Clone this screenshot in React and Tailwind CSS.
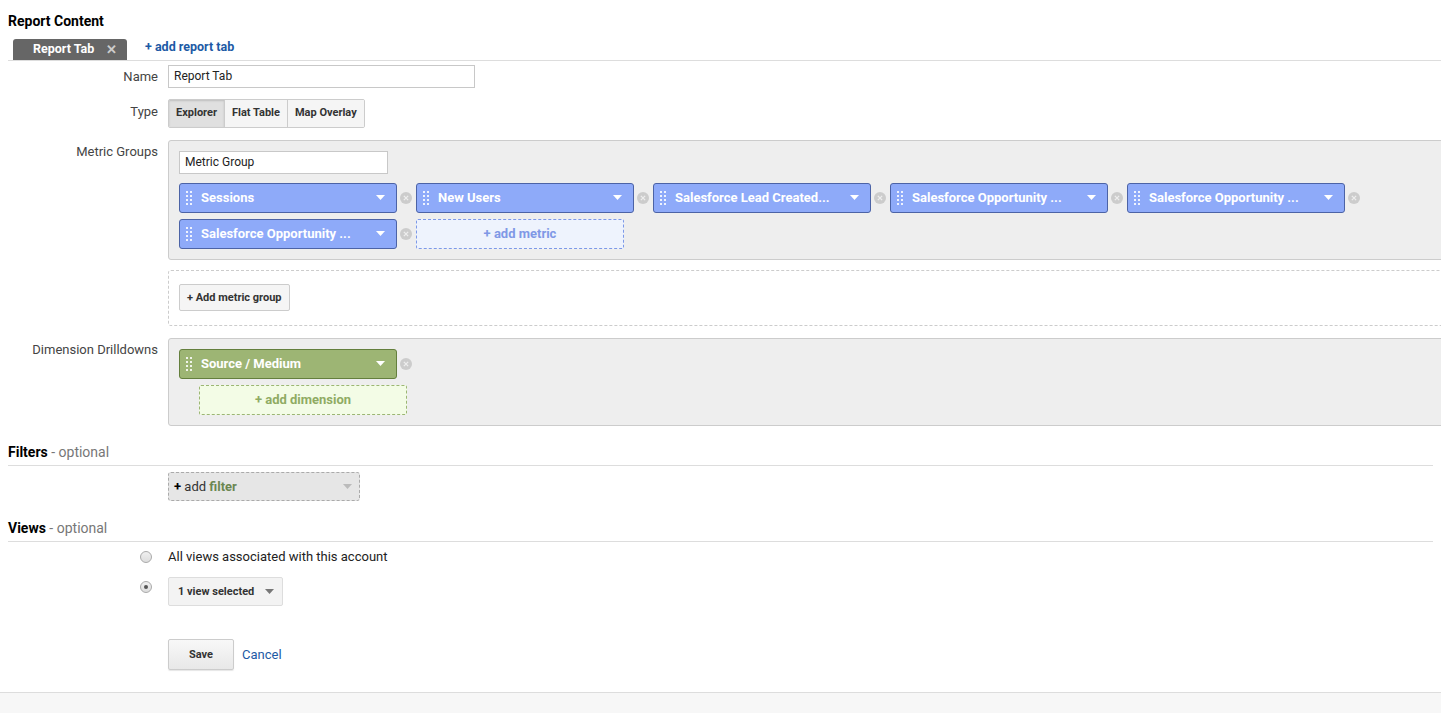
import React from 'react';

const font = { fontFamily: 'Roboto, "Liberation Sans", sans-serif' };

const Dots = () => (
  <svg width="6" height="14" viewBox="0 0 6 14" className="shrink-0">
    {[0, 1, 2, 3].map((r) => (
      <g key={r} fill="#ffffff" fillOpacity="0.85">
        <rect x="0" y={r * 4} width="2" height="2" />
        <rect x="4" y={r * 4} width="2" height="2" />
      </g>
    ))}
  </svg>
);

const Caret = ({ color = '#fff' }) => (
  <svg width="9" height="5" viewBox="0 0 9 5" className="shrink-0">
    <path d="M0 0h9L4.5 5z" fill={color} />
  </svg>
);

const Remove = () => (
  <svg width="12" height="12" viewBox="0 0 13 13" className="shrink-0">
    <circle cx="6.5" cy="6.5" r="6.5" fill="#cccccc" />
    <path d="M4.2 4.2l4.6 4.6M8.8 4.2l-4.6 4.6" stroke="#eeeeee" strokeWidth="1.4" />
  </svg>
);

const Chip = ({ label, green }) => (
  <div className="flex items-center gap-[3px]">
    <div
      className={
        'flex items-center h-[30px] w-[218px] rounded-[3px] border pl-[6px] pr-[11px] ' +
        (green ? 'bg-[#9db574] border-[#647f3d]' : 'bg-[#8eaaf9] border-[#4c63a6]')
      }
    >
      <Dots />
      <span className="ml-[9px] flex-1 truncate text-[13px] font-bold text-white">{label}</span>
      <Caret />
    </div>
    <Remove />
  </div>
);

const Label = ({ children, className = '' }) => (
  <div className={'w-[158px] shrink-0 text-right text-[13px] text-[#444] ' + className}>{children}</div>
);

const Row = ({ label, labelClass, children, className = '' }) => (
  <div className={'flex gap-[10px] ' + className}>
    <Label className={labelClass}>{label}</Label>
    <div className="flex-1 min-w-0">{children}</div>
  </div>
);

const Heading = ({ title, className = '' }) => (
  <div className={'mx-[8px] border-b border-[#dddddd] pb-[3px] leading-[20px] ' + className}>
    <span className="text-[14px] font-bold text-black">{title}</span>
    <span className="text-[14px] text-[#777]"> - optional</span>
  </div>
);

export default function App() {
  const metrics = [
    'Sessions',
    'New Users',
    'Salesforce Lead Created...',
    'Salesforce Opportunity ...',
    'Salesforce Opportunity ...',
  ];
  return (
    <div className="h-[713px] w-[1441px] overflow-hidden bg-white text-[#333]" style={font}>
      <div className="h-[693px] border-b border-[#dddddd]">
        <div className="px-[8px] pt-[12px]">
          <h2 className="text-[14px] font-bold leading-[18px] text-black">Report Content</h2>
        </div>
        <div className="ml-[8px] mt-[8px] flex items-end border-b border-[#dddddd]">
          <div className="ml-[5px] flex h-[21px] w-[114px] items-center rounded-t-[3px] bg-[#666666] pl-[20px] pr-[10px] text-[12.5px] font-bold text-white">
            <span className="flex-1">Report Tab</span>
            <span className="text-[13px] text-[#cccccc]">✕</span>
          </div>
          <a className="ml-[18px] mb-[3px] text-[12.5px] font-bold text-[#1d5aa5]">+ add report tab</a>
        </div>

        <Row label="Name" labelClass="pt-[2px]" className="mt-[4px]">
          <div className="flex h-[23px] w-[307px] items-center border border-[#c8c8c8] px-[5px] text-[12px] text-[#222]">
            Report Tab
          </div>
        </Row>

        <Row label="Type" labelClass="pt-[3px]" className="mt-[11px]">
          <div className="flex h-[29px] w-fit overflow-hidden rounded-[2px] border border-[#cccccc] text-[11px] font-bold text-[#333]">
            <div className="flex items-center bg-[#e0e0e0] px-[7px] shadow-[inset_0_1px_2px_rgba(0,0,0,0.15)]">Explorer</div>
            <div className="flex items-center border-l border-[#cccccc] bg-[#f5f5f5] px-[7px]">Flat Table</div>
            <div className="flex items-center border-l border-[#cccccc] bg-[#f5f5f5] px-[7px]">Map Overlay</div>
          </div>
        </Row>

        <Row label="Metric Groups" labelClass="pt-[2px]" className="mt-[12px]">
          <div className="w-[1290px] rounded-[3px] border border-[#cccccc] bg-[#eeeeee] px-[10px] pt-[10px] pb-[10px]">
            <div className="flex h-[23px] w-[209px] items-center border border-[#c8c8c8] bg-white px-[5px] text-[12px] text-[#222]">
              Metric Group
            </div>
            <div className="mt-[9px] flex flex-wrap gap-x-[4px] gap-y-[6px] w-[1200px]">
              {metrics.map((m, i) => (
                <Chip key={i} label={m} />
              ))}
              <Chip label="Salesforce Opportunity ..." />
              <div className="flex h-[30px] w-[208px] items-center justify-center rounded-[2px] border border-dashed border-[#7d99e8] bg-[#eef3fd] text-[13px] font-bold text-[#7f98e6]">
                + add metric
              </div>
            </div>
          </div>
        </Row>

        <Row label="" className="mt-[10px]">
          <div className="flex h-[56px] w-[1290px] items-center rounded-[3px] border border-dashed border-[#cccccc] px-[10px]">
            <div className="flex h-[27px] items-center rounded-[2px] border border-[#cccccc] bg-[#f5f5f5] px-[7px] text-[11px] font-bold text-[#333]">
              + Add metric group
            </div>
          </div>
        </Row>

        <Row label="Dimension Drilldowns" labelClass="pt-[2px]" className="mt-[12px]">
          <div className="w-[1290px] rounded-[3px] border border-[#cccccc] bg-[#eeeeee] px-[10px] pt-[10px] pb-[10px]">
            <Chip label="Source / Medium" green />
            <div className="ml-[20px] mt-[6px] flex h-[30px] w-[208px] items-center justify-center rounded-[2px] border border-dashed border-[#9cb674] bg-[#f3fce6] text-[13px] font-bold text-[#8fab63]">
              + add dimension
            </div>
          </div>
        </Row>

        <Heading title="Filters" className="mt-[16px]" />
        <Row label="" className="mt-[6px]">
          <div className="flex h-[29px] w-[192px] items-center rounded-[3px] border border-dashed border-[#aaaaaa] bg-[#e6e6e6] pl-[5px] pr-[7px] text-[13px]">
            <span className="flex-1">
              <b className="text-black">+</b> add <b className="text-[#6b8751]">filter</b>
            </span>
            <Caret color="#bbbbbb" />
          </div>
        </Row>

        <Heading title="Views" className="mt-[17px]" />
        <div className="mt-[5px] flex items-center">
          <div className="flex w-[168px] justify-end pr-[16px]">
            <span className="block h-[12px] w-[12px] rounded-full border border-[#aaaaaa] bg-gradient-to-b from-[#f0f0f0] to-[#dddddd]" />
          </div>
          <span className="text-[13px] text-[#222]">All views associated with this account</span>
        </div>
        <div className="mt-[11px] flex">
          <div className="flex w-[168px] justify-end pr-[16px] pt-[4px]">
            <span className="flex h-[12px] w-[12px] items-center justify-center rounded-full border border-[#aaaaaa] bg-gradient-to-b from-[#f0f0f0] to-[#dddddd]">
              <span className="block h-[4px] w-[4px] rounded-full bg-[#555]" />
            </span>
          </div>
          <div className="flex h-[29px] w-[115px] items-center rounded-[2px] border border-[#dddddd] bg-[#f3f3f3] pl-[9px] pr-[8px] text-[11px] font-bold text-[#333]">
            <span className="flex-1">1 view selected</span>
            <Caret color="#777" />
          </div>
        </div>

        <div className="mt-[33px] flex items-center pl-[168px]">
          <div className="flex h-[31px] w-[66px] items-center justify-center rounded-[2px] border border-[#cccccc] bg-gradient-to-b from-[#f8f8f8] to-[#e8e8e8] text-[11px] font-bold text-[#333] shadow-[0_1px_1px_rgba(0,0,0,0.1)]">
            Save
          </div>
          <a className="ml-[8px] text-[13px] text-[#1d5aa5]">Cancel</a>
        </div>
      </div>
      <div className="h-[20px] bg-[#f7f7f7]" />
    </div>
  );
}
